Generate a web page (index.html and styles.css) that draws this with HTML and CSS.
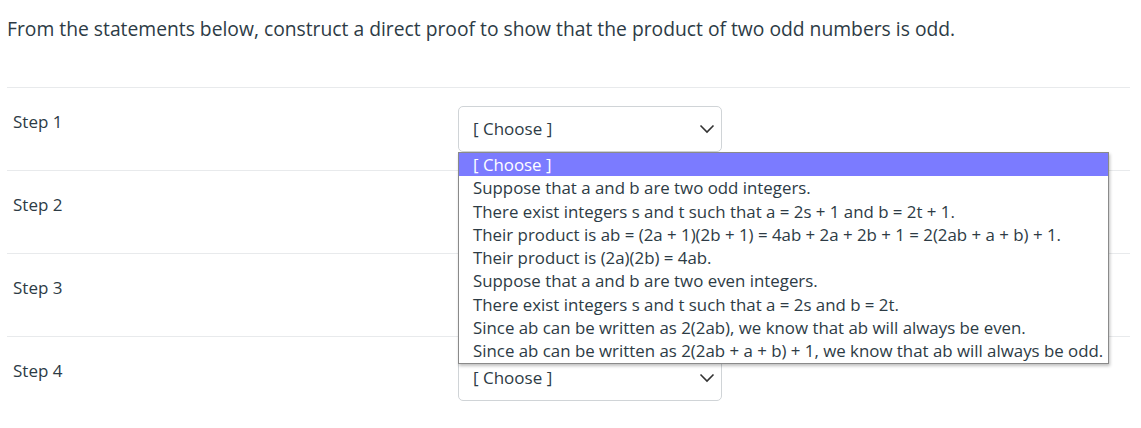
FILE: index.html
```html
<!DOCTYPE html>
<html lang="en">
<head>
    <meta charset="UTF-8">
    <title>Direct proof question</title>
    <link rel="stylesheet" href="styles.css">
</head>
<body>
    <div class="question">
        <p class="question-text">From the statements below, construct a direct proof to show that the product of two odd numbers is odd.</p>
        <div class="answers">
            <div class="step-row">
                <div class="step-label">Step 1</div>
                <div class="select-wrap">
                    <div class="select-box">
                        <span>[ Choose ]</span>
                        <svg class="chevron" width="16" height="10" viewBox="0 0 16 10"><path d="M1.5 1.5 L8 8 L14.5 1.5" fill="none" stroke="#333" stroke-width="1.6"/></svg>
                    </div>
                    <ul class="options">
                        <li class="selected">[ Choose ]</li>
                        <li>Suppose that a and b are two odd integers.</li>
                        <li>There exist integers s and t such that a = 2s + 1 and b = 2t + 1.</li>
                        <li>Their product is ab = (2a + 1)(2b + 1) = 4ab + 2a + 2b + 1 = 2(2ab + a + b) + 1.</li>
                        <li>Their product is (2a)(2b) = 4ab.</li>
                        <li>Suppose that a and b are two even integers.</li>
                        <li>There exist integers s and t such that a = 2s and b = 2t.</li>
                        <li>Since ab can be written as 2(2ab), we know that ab will always be even.</li>
                        <li>Since ab can be written as 2(2ab + a + b) + 1, we know that ab will always be odd.</li>
                    </ul>
                </div>
            </div>
            <div class="step-row">
                <div class="step-label">Step 2</div>
                <div class="select-wrap">
                    <div class="select-box">
                        <span>[ Choose ]</span>
                        <svg class="chevron" width="16" height="10" viewBox="0 0 16 10"><path d="M1.5 1.5 L8 8 L14.5 1.5" fill="none" stroke="#333" stroke-width="1.6"/></svg>
                    </div>
                </div>
            </div>
            <div class="step-row">
                <div class="step-label">Step 3</div>
                <div class="select-wrap">
                    <div class="select-box">
                        <span>[ Choose ]</span>
                        <svg class="chevron" width="16" height="10" viewBox="0 0 16 10"><path d="M1.5 1.5 L8 8 L14.5 1.5" fill="none" stroke="#333" stroke-width="1.6"/></svg>
                    </div>
                </div>
            </div>
            <div class="step-row">
                <div class="step-label">Step 4</div>
                <div class="select-wrap">
                    <div class="select-box">
                        <span>[ Choose ]</span>
                        <svg class="chevron" width="16" height="10" viewBox="0 0 16 10"><path d="M1.5 1.5 L8 8 L14.5 1.5" fill="none" stroke="#333" stroke-width="1.6"/></svg>
                    </div>
                </div>
            </div>
        </div>
    </div>
</body>
</html>
```

FILE: styles.css
```css
:root {
    --text-color: #2d3b45;
    --rule-color: #e8eaec;
    --border-color: #d0d4d7;
    --highlight: #7b7bff;
}
body {
    margin: 0;
    font-family: 'Open Sans', sans-serif;
    color: var(--text-color);
    background-color: #fff;
}
.question {
    margin-left: 7px;
    width: 1123px;
}
.question-text {
    margin: 0;
    padding-top: 15px;
    height: 87px;
    box-sizing: border-box;
    font-size: 19.3px;
    line-height: 28px;
}
.step-row {
    display: flex;
    border-top: 1px solid var(--rule-color);
    height: 82px;
}
.step-label {
    width: 445px;
    padding-left: 6px;
    padding-top: 21px;
    font-size: 17px;
    line-height: 26px;
}
.select-wrap {
    position: relative;
    padding-top: 18px;
}
.select-box {
    width: 264px;
    height: 46px;
    box-sizing: border-box;
    border: 1px solid var(--border-color);
    border-radius: 5px;
    display: flex;
    align-items: center;
    justify-content: space-between;
    padding: 0 6px 2px 14px;
    font-size: 17px;
}
.chevron {
    margin-top: 2px;
}
.options {
    position: absolute;
    top: 64px;
    left: 0;
    z-index: 10;
    width: 649px;
    margin: 0;
    padding: 0;
    list-style: none;
    background-color: #fff;
    border: 1px solid #8a8a8a;
    box-shadow: 1px 2px 3px rgba(0,0,0,0.25);
    font-size: 16.85px;
    line-height: 23.3px;
    white-space: nowrap;
}
.options li {
    padding-left: 14px;
}
.options .selected {
    background-color: var(--highlight);
    color: #fff;
}
```
